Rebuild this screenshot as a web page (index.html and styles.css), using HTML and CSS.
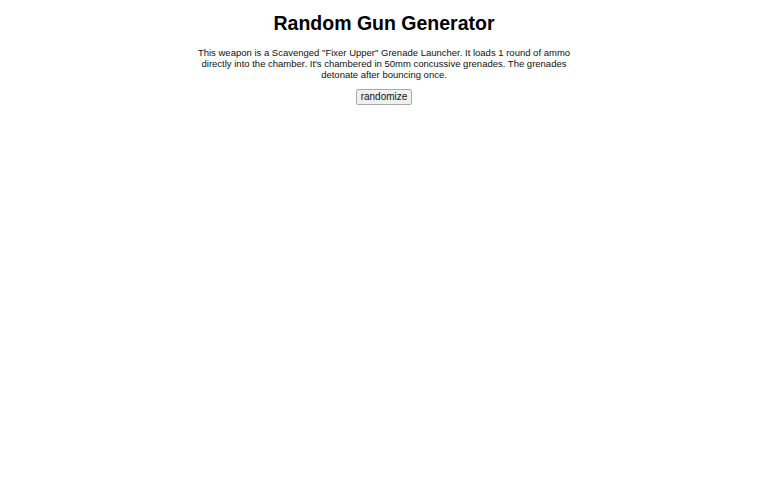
FILE: index.html
```html
<!DOCTYPE html>
<html lang="en">
<head>
    <meta charset="UTF-8">
    <meta name="viewport" content="width=device-width, initial-scale=1.0">
    <title>Random Gun Generator</title>
    <link rel="stylesheet" href="styles.css">
</head>
<body>
    <div class="generator">
        <h1>Random Gun Generator</h1>
        <p id="description">This weapon is a Scavenged "Fixer Upper" Grenade Launcher. It loads 1 round of ammo directly into the chamber. It's chambered in 50mm concussive grenades. The grenades detonate after bouncing once.</p>
        <button class="randomize">randomize</button>
    </div>
</body>
</html>
```

FILE: styles.css
```css
body {
    margin: 0;
    padding: 8px;
    font-family: "Liberation Sans", Arial, sans-serif;
    background-color: #fff;
    color: #000;
}
.generator {
    text-align: center;
}
h1 {
    font-size: 19.5px;
    margin: 4px 0 12px;
}
p {
    max-width: 380px;
    margin: 0 auto 6px;
    font-size: 9.5px;
    line-height: 11px;
    color: #111;
}
.randomize {
    font-family: "Liberation Sans", Arial, sans-serif;
    font-size: 10px;
    padding: 1px 4px 2px;
    color: #111;
    background-color: #f0f0f0;
    border: 1px solid #a8a8a8;
    border-radius: 2px;
}
```
